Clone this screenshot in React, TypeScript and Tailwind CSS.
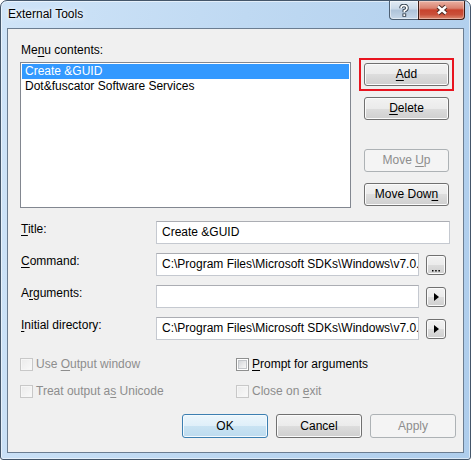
import React from "react";

const font = "font-['Segoe_UI','Liberation_Sans',Arial,sans-serif] text-[12px] leading-[15px]";

// classic Win7 push button
function Btn({
  children,
  className = "",
  disabled = false,
  primary = false,
}: {
  children: React.ReactNode;
  className?: string;
  disabled?: boolean;
  primary?: boolean;
}) {
  let skin =
    "border-[#707070] bg-[linear-gradient(#f2f2f2,#ebebeb_50%,#dddddd_50%,#cfcfcf)] text-black shadow-[inset_0_0_0_1px_#fbfbfb]";
  if (disabled) skin = "border-[#adb2b5] bg-[#f4f4f4] text-[#8d8d8d]";
  if (primary)
    skin =
      "border-[#3c7fb1] bg-[linear-gradient(#ecf6fc,#dfeff9_50%,#c9e3f3_50%,#bddbee)] text-black shadow-[inset_0_0_0_1px_#f4fafe]";
  return (
    <div
      className={`flex items-center justify-center rounded-[3px] border ${skin} ${className}`}
    >
      {children}
    </div>
  );
}

function Key({ c }: { c: string }) {
  return <span className="underline underline-offset-2">{c}</span>;
}

function Check({ label, disabled = false }: { label: React.ReactNode; disabled?: boolean }) {
  return (
    <div className="flex h-[15px] items-center">
      <div
        className={`h-[13px] w-[13px] border p-[1px] ${
          disabled ? "border-[#c8c8c8] bg-[#f6f6f6]" : "border-[#8e8f8f] bg-white"
        }`}
      >
        <div
          className={`h-full w-full ${
            disabled
              ? "bg-[linear-gradient(135deg,#ececec,#f8f8f8)]"
              : "bg-[linear-gradient(135deg,#cfd2d6,#f4f4f4_80%)] shadow-[inset_0_0_0_1px_#c3c6ca]"
          }`}
        />
      </div>
      <span className={`ml-[3px] ${disabled ? "text-[#8d8d8d]" : "text-black"}`}>{label}</span>
    </div>
  );
}

function Field({
  label,
  value,
  wide = false,
  extra,
}: {
  label: React.ReactNode;
  value: string;
  wide?: boolean;
  extra?: "dots" | "arrow";
}) {
  return (
    <div className="flex h-[23px] items-start">
      <div className="w-[136px] pt-[1px] pl-[1px]">{label}</div>
      <div
        className={`h-[23px] overflow-hidden whitespace-nowrap border border-[#c5c9d0] border-t-[#abadb3] bg-white pl-[5px] pt-[3px] ${
          wide ? "w-[294px]" : "w-[263px]"
        }`}
      >
        {value}
      </div>
      {extra && (
        <Btn className="mt-[2px] ml-[7px] h-[20px] w-[20px]">
          {extra === "dots" ? (
            <svg width="8" height="10" viewBox="0 0 8 10" className="mt-[4px]">
              <rect x="0" y="8" width="1.5" height="1.5" fill="#000" />
              <rect x="3.2" y="8" width="1.5" height="1.5" fill="#000" />
              <rect x="6.4" y="8" width="1.5" height="1.5" fill="#000" />
            </svg>
          ) : (
            <svg width="5" height="8" viewBox="0 0 5 8">
              <path d="M0 0 L5 4 L0 8 Z" fill="#000" />
            </svg>
          )}
        </Btn>
      )}
    </div>
  );
}

export default function App() {
  return (
    <div className={`h-[460px] w-[471px] ${font} text-black`}>
      <div className="flex h-full w-full flex-col overflow-hidden rounded-t-[7px] rounded-b-[3px] border border-[#44566a] bg-[linear-gradient(100deg,#cfe4f8,#bfd9f2_45%,#aecdec)] shadow-[inset_0_0_0_1px_rgba(255,255,255,0.55)]">
        {/* caption */}
        <div className="flex h-[27px] shrink-0 items-start">
          <div className="pl-[7px] pt-[6px] [text-shadow:0_0_6px_#fff,0_0_3px_#fff]">
            External Tools
          </div>
          <div className="ml-auto mr-[5px] flex">
            <div className="flex h-[19px] w-[29px] items-center justify-center rounded-bl-[4px] border border-t-0 border-r-0 border-[#4d5f73] bg-[linear-gradient(#e2ebf4,#c9d8e8_45%,#aec3d9_50%,#c6d7e9)] shadow-[inset_0_0_0_1px_rgba(255,255,255,0.5)]">
              <svg width="12" height="13" viewBox="0 0 12 13">
                <path
                  d="M3 4.2 Q3 1.5 6 1.5 Q9 1.5 9 4 Q9 5.8 6.3 6.8 L6.3 8.2"
                  fill="none"
                  stroke="#3d4a58"
                  strokeWidth="3.6"
                />
                <rect x="4.4" y="9.4" width="3.8" height="3.4" fill="#3d4a58" />
                <path
                  d="M3 4.2 Q3 1.5 6 1.5 Q9 1.5 9 4 Q9 5.8 6.3 6.8 L6.3 8.2"
                  fill="none"
                  stroke="#fff"
                  strokeWidth="1.6"
                />
                <rect x="5.4" y="10.2" width="1.8" height="1.8" fill="#fff" />
              </svg>
            </div>
            <div className="flex h-[19px] w-[47px] items-center justify-center rounded-br-[4px] border border-t-0 border-[#3f1d16] bg-[linear-gradient(#eab1a3,#d98270_40%,#c8432d_50%,#c9503a_75%,#dd8b72)] shadow-[inset_0_0_0_1px_rgba(255,255,255,0.35)]">
              <svg width="14" height="12" viewBox="0 0 14 12">
                <path d="M3 2.5 L11 9.5 M11 2.5 L3 9.5" stroke="#4a2a24" strokeWidth="4.4" />
                <path d="M3 2.5 L11 9.5 M11 2.5 L3 9.5" stroke="#fff" strokeWidth="2.4" />
              </svg>
            </div>
          </div>
        </div>

        {/* client area */}
        <div className="mx-[6px] h-[425px] shrink-0 border border-[#6b7d91] bg-[#f0f0f0]">
          <div className="flex pt-[14px]">
            <div className="ml-[12px] w-[331px]">
              <div className="pl-[1px]">
                Me<Key c="n" />u contents:
              </div>
              <div className="mt-[4px] h-[146px] border border-[#828790] bg-white p-[1px]">
                <div className="h-[15px] bg-[#3399ff] pl-[3px] text-white">Create &amp;GUID</div>
                <div className="h-[15px] pl-[3px]">Dot&amp;fuscator Software Services</div>
              </div>
            </div>
            <div className="ml-[13px] mt-[20px] flex flex-col">
              {/* red marker box around Add */}
              <div className="border-2 border-[#e8141f] p-[3px] -m-[5px]">
                <Btn className="h-[23px] w-[85px]">
                  <Key c="A" />dd
                </Btn>
              </div>
              <Btn className="mt-[11px] h-[23px] w-[85px]">
                <Key c="D" />elete
              </Btn>
              <Btn disabled className="mt-[29px] h-[23px] w-[85px]">
                Move&nbsp;<Key c="U" />p
              </Btn>
              <Btn className="mt-[11px] h-[23px] w-[85px]">
                Move Dow<Key c="n" />
              </Btn>
            </div>
          </div>

          <div className="ml-[12px] mt-[13px] flex flex-col gap-[9px]">
            <Field wide label={<><Key c="T" />itle:</>} value="Create &GUID" />
            <Field
              extra="dots"
              label={<><Key c="C" />ommand:</>}
              value="C:\Program Files\Microsoft SDKs\Windows\v7.0."
            />
            <Field extra="arrow" label={<>A<Key c="r" />guments:</>} value="" />
            <Field
              extra="arrow"
              label={<><Key c="I" />nitial directory:</>}
              value="C:\Program Files\Microsoft SDKs\Windows\v7.0."
            />
          </div>

          <div className="ml-[12px] mt-[17px] flex flex-col gap-[12px]">
            <div className="flex">
              <div className="w-[216px]">
                <Check disabled label={<>Use <Key c="O" />utput window</>} />
              </div>
              <Check label={<><Key c="P" />rompt for arguments</>} />
            </div>
            <div className="flex">
              <div className="w-[216px]">
                <Check disabled label={<>Treat output a<Key c="s" /> Unicode</>} />
              </div>
              <Check disabled label={<>Close on <Key c="e" />xit</>} />
            </div>
          </div>

          <div className="mt-[15px] flex justify-end gap-[8px] pr-[7px]">
            <Btn primary className="h-[24px] w-[86px]">OK</Btn>
            <Btn className="h-[24px] w-[86px]">Cancel</Btn>
            <Btn disabled className="h-[24px] w-[86px]">Apply</Btn>
          </div>
        </div>
      </div>
    </div>
  );
}
